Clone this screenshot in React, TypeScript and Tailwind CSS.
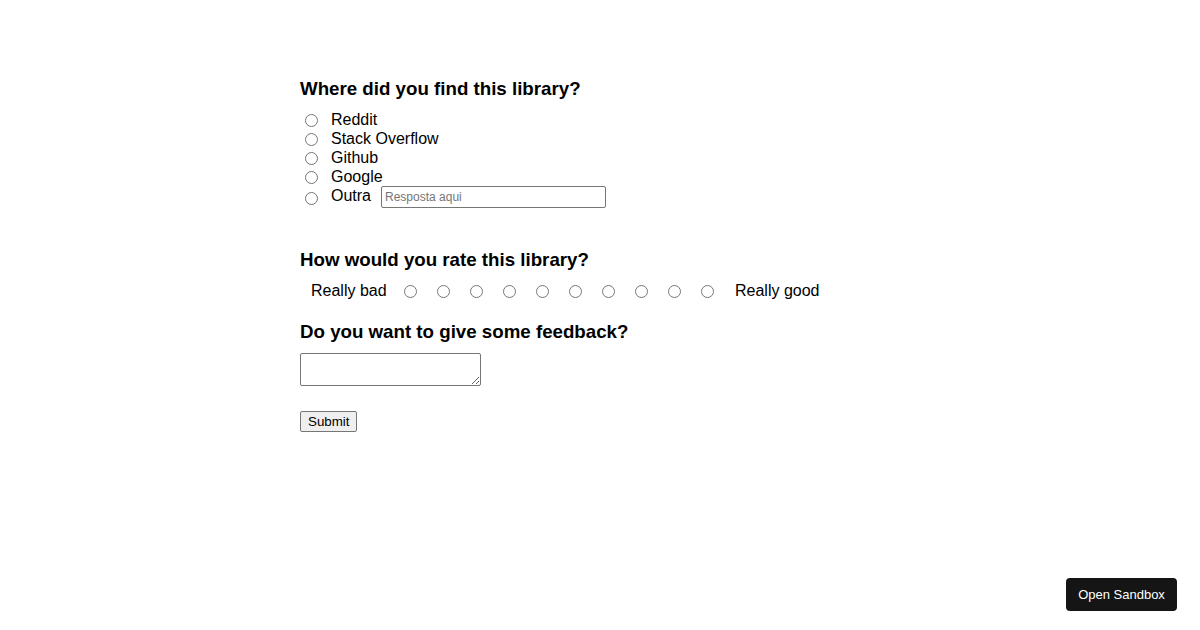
import React from "react";

const sources = ["Reddit", "Stack Overflow", "Github", "Google"];

export default function App() {
  return (
    <div className="relative w-[1200px] h-[630px] bg-white text-black" style={{ fontFamily: '"Liberation Sans", Arial, sans-serif' }}>
      <div className="mx-auto w-[600px] pt-[78px]">
        <h3 className="text-[18.72px] leading-[22px] font-bold">Where did you find this library?</h3>
        <div className="mt-[10px] flex flex-col">
          {sources.map((s) => (
            <label key={s} className="flex items-center h-[19px] text-[16px]">
              <input type="radio" name="src" className="m-0 ml-[5px] mt-[2px] w-[13px] h-[13px]" />
              <span className="ml-[13px]">{s}</span>
            </label>
          ))}
          <label className="flex items-center h-[22px] text-[16px]">
            <input type="radio" name="src" className="m-0 ml-[5px] mt-[3px] w-[13px] h-[13px]" />
            <span className="ml-[13px] -mt-[3px]">Outra</span>
            <input
              type="text"
              placeholder="Resposta aqui"
              className="ml-[10px] w-[225px] h-[22px] border border-[#767676] rounded-[2px] px-[3px] text-[12px] placeholder:text-[#757575] outline-none"
            />
          </label>
        </div>
        <h3 className="mt-[41px] text-[18.72px] leading-[22px] font-bold">How would you rate this library?</h3>
        <div className="mt-[10px] flex items-center h-[19px] pl-[11px] text-[16px]">
          <span className="w-[75px] shrink-0 whitespace-nowrap">Really bad</span>
          <div className="ml-[18px] flex shrink-0 gap-[20px]">
            {Array.from({ length: 10 }).map((_, i) => (
              <input key={i} type="radio" name="rate" className="m-0 mt-[1px] w-[13px] h-[13px]" />
            ))}
          </div>
          <span className="ml-[21px] shrink-0 whitespace-nowrap">Really good</span>
        </div>
        <h3 className="mt-[21px] text-[18.72px] leading-[22px] font-bold">Do you want to give some feedback?</h3>
        <textarea className="block mt-[10px] w-[181px] h-[33px] border border-[#767676] rounded-[2px] outline-none resize" />
        <button className="block mt-[25px] h-[21px] px-[7px] bg-[#efefef] border border-[#767676] rounded-[2px] text-[13.33px]">
          Submit
        </button>
      </div>
      <button
        className="absolute right-[23px] bottom-[19px] w-[111px] h-[33px] bg-[#151515] text-white rounded-[4px] text-[13px]"
        style={{ fontFamily: '"Liberation Sans", Arial, sans-serif' }}
      >
        Open Sandbox
      </button>
    </div>
  );
}
